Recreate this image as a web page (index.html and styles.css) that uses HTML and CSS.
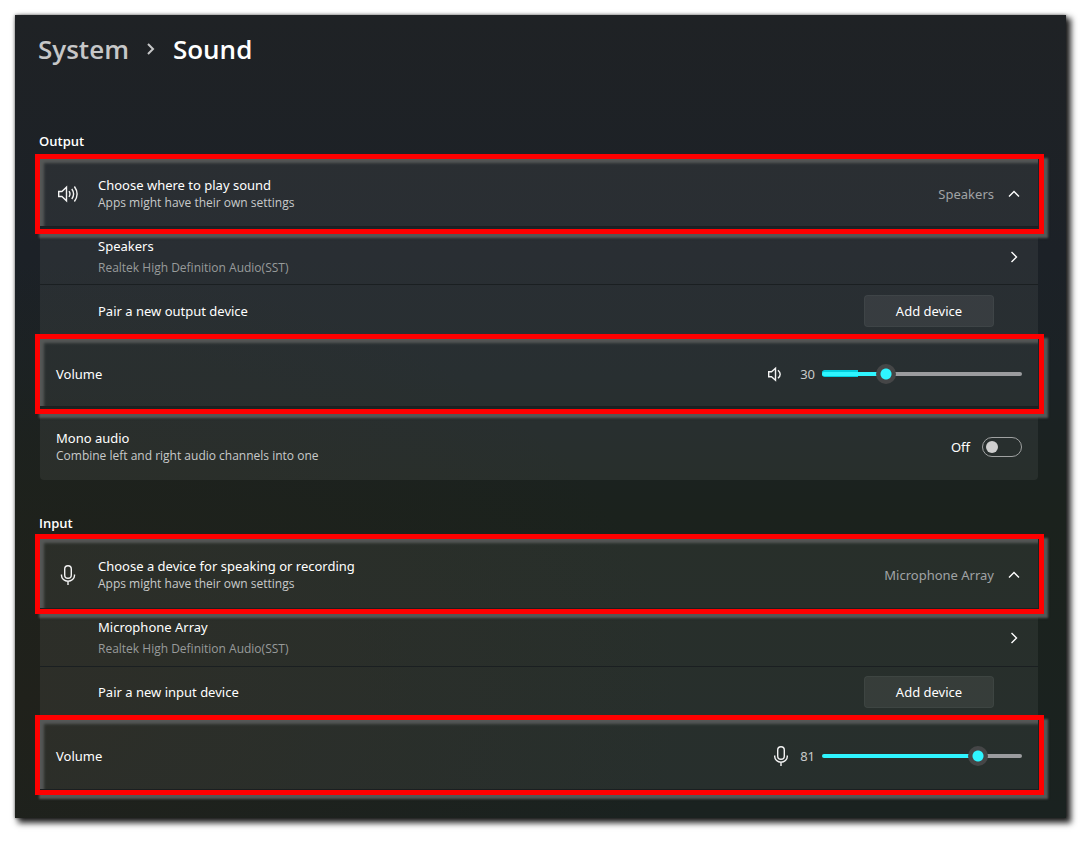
FILE: index.html
```html
<!doctype html>
<html lang="en">
	<head>
		<meta charset="UTF-8" />
		<meta name="viewport" content="width=device-width, initial-scale=1.0" />
		<title>System - Sound</title>
		<link rel="stylesheet" href="styles.css">
	</head>
	<body>
		<main class="window">
			<h1 class="breadcrumb">
				<a href="#system">System</a>
				<svg width="10" height="14" viewBox="0 0 10 14"><path d="M2 2l5 5-5 5" /></svg>
				<span>Sound</span>
			</h1>

			<section class="output">
				<h2>Output</h2>
				<div class="highlight">
					<div class="row">
						<svg class="icon" width="24" height="24" viewBox="0 0 24 24"><path d="M2.7 9.5h3.2l4.6-4.3v13.6l-4.6-4.3H2.7z" /><path d="M13 9.2q2 2.8 0 5.6M15.8 7q3.6 5 0 10M18.4 4.5q5.4 7.5 0 15" /></svg>
						<div class="text">
							<div>Choose where to play sound</div>
							<div class="description">Apps might have their own settings</div>
						</div>
						<span class="current">Speakers</span>
						<button class="chevron" aria-label="Collapse output devices" aria-expanded="true"><svg width="16" height="16" viewBox="0 0 16 16"><path d="M3 10.5l5-5 5 5" /></svg></button>
					</div>
				</div>
				<div class="row device">
					<div class="text">
						<div>Speakers</div>
						<div class="description">Realtek High Definition Audio(SST)</div>
					</div>
					<button class="chevron" aria-label="Speakers properties"><svg width="16" height="16" viewBox="0 0 16 16"><path d="M5.5 3l5 5-5 5" /></svg></button>
				</div>
				<div class="row pair">
					<div class="text">Pair a new output device</div>
					<button class="add">Add device</button>
				</div>
				<div class="highlight">
					<div class="row">
						<label class="text" for="output-volume">Volume</label>
						<svg class="icon" width="20" height="20" viewBox="0 0 20 20"><path d="M.7 7.7h2.8l4-3.5v12l-4-3.5H.7z" /><path d="M10 6.2q4.4 4 0 8" /></svg>
						<output class="level" for="output-volume">30</output>
						<input class="slider playing" id="output-volume" type="range" min="0" max="100" value="30" style="--level: 30%">
					</div>
				</div>
				<div class="row mono">
					<label class="text" for="mono">
						<span>Mono audio</span>
						<span class="description">Combine left and right audio channels into one</span>
					</label>
					<span class="state">Off</span>
					<input class="toggle" id="mono" type="checkbox">
				</div>
			</section>

			<section class="input">
				<h2>Input</h2>
				<div class="highlight">
					<div class="row">
						<svg class="icon" width="24" height="24" viewBox="0 0 24 24"><rect x="8.7" y="2.7" width="6.6" height="12.6" rx="3.3" /><path d="M5.5 11.5v1a6.5 5.7 0 0 0 13 0v-1M12 18.3v3.7" /></svg>
						<div class="text">
							<div>Choose a device for speaking or recording</div>
							<div class="description">Apps might have their own settings</div>
						</div>
						<span class="current">Microphone Array</span>
						<button class="chevron" aria-label="Collapse input devices" aria-expanded="true"><svg width="16" height="16" viewBox="0 0 16 16"><path d="M3 10.5l5-5 5 5" /></svg></button>
					</div>
				</div>
				<div class="row device">
					<div class="text">
						<div>Microphone Array</div>
						<div class="description">Realtek High Definition Audio(SST)</div>
					</div>
					<button class="chevron" aria-label="Microphone Array properties"><svg width="16" height="16" viewBox="0 0 16 16"><path d="M5.5 3l5 5-5 5" /></svg></button>
				</div>
				<div class="row pair">
					<div class="text">Pair a new input device</div>
					<button class="add">Add device</button>
				</div>
				<div class="highlight">
					<div class="row">
						<label class="text" for="input-volume">Volume</label>
						<svg class="icon" width="20" height="24" viewBox="4 0 20 24"><rect x="13.7" y="2.7" width="6.6" height="12.6" rx="3.3" /><path d="M10.7 11.5v1a6.3 5.7 0 0 0 12.6 0v-1M17 18.3v3.7" /></svg>
						<output class="level" for="input-volume">81</output>
						<input class="slider" id="input-volume" type="range" min="0" max="100" value="81" style="--level: 81%">
					</div>
				</div>
			</section>
		</main>

		<script>
			document.querySelectorAll('.slider').forEach((slider) => {
				slider.addEventListener('input', () => {
					slider.style.setProperty('--level', slider.value + '%');
					slider.previousElementSibling.textContent = slider.value;
				});
			});

			const mono = document.getElementById('mono');
			mono.addEventListener('change', () => {
				mono.previousElementSibling.textContent = mono.checked ? 'On' : 'Off';
			});
		</script>
	</body>
</html>
```
FILE: styles.css
```css
* { box-sizing: border-box; }
body { margin: 0; background: #fff; color: #fff; font: 13px/18px "Noto Sans", "Open Sans", sans-serif; }
button, input { font: inherit; color: inherit; margin: 0; }
svg { display: block; fill: none; stroke: currentColor; stroke-width: 1.4; flex: none; }

.window {
	margin: 15px 26px 26px 15px;
	padding: 16px 22px 23px 20px;
	background:
		radial-gradient(ellipse at 0 85%, #20211b, transparent 45%),
		linear-gradient(#1f2225 0%, #1c2127 30%, #1b2225 45%, #1b221d 62%, #1a2220 100%);
	box-shadow: 0 0 3px rgba(0, 0, 0, 0.5), 4px 4px 6px 1px rgba(0, 0, 0, 0.85);
}

.breadcrumb { display: flex; align-items: center; gap: 17px; margin: 0 0 65px 3px; font: 600 26px/36px "Open Sans", sans-serif; }
.breadcrumb a { color: #c6c7c8; text-decoration: none; }
.breadcrumb svg { color: #c6c7c8; stroke-width: 2; }
h2 { margin: 0 0 4px 4px; font: 600 13px/18px "Open Sans", sans-serif; }
.input h2 { margin-top: 34px; margin-bottom: 2px; }

.row { display: flex; align-items: center; margin: 0 6px 0 5px; padding: 0 16px; background: rgba(255, 255, 255, 0.06); }
.text { flex: 1; }
.text span { display: block; }
.description { font-family: "Open Sans", sans-serif; font-size: 12px; color: #c8caca; }
.icon { color: #f4f4f4; }

.highlight { position: relative; z-index: 1; height: 80px; padding: 0 1px 2px 0; border: 5px solid #f00; box-shadow: 4px 4px 2px #555756; }
.highlight .row { height: 100%; margin: 0; padding-top: 2px; border-bottom: 1px solid #1a1f21; box-shadow: inset 4px 4px 3px #555857; }
.input .highlight { padding-bottom: 0; }
.highlight .icon + .text { margin-left: 18px; }

.device { min-height: 51px; padding: 0 16px 4px 58px; border-bottom: 1px solid #1a1f21; line-height: 22px; }
.device .description { color: #989b9b; }
.input .device { min-height: 53px; }
.pair { min-height: 49px; padding: 2px 44px 0 58px; }
.input .pair { min-height: 48px; }
.mono { min-height: 66px; border-radius: 0 0 4px 4px; }

.current { margin-right: 12px; color: #a0a3a5; }
.chevron { padding: 0; border: 0; background: none; cursor: pointer; }
.add { width: 130px; height: 32px; padding: 0; border: 1px solid rgba(255, 255, 255, 0.04); border-radius: 4px; background: rgba(255, 255, 255, 0.07); cursor: pointer; }
.add:hover { background: rgba(255, 255, 255, 0.12); }

.level { margin: 0 7px 0 12px; color: #c8caca; }
.slider {
	appearance: none;
	width: 200px;
	height: 20px;
	border-radius: 4px;
	background: none;
	cursor: pointer;
}
/* live meter behind the track */
.slider.playing {
	background:
		radial-gradient(circle at 3px 50%, #00cfdf 3px, transparent 4px) 0 50% / 4px 7px no-repeat,
		linear-gradient(#00cfdf, #00cfdf) 3px 50% / 33px 7px no-repeat;
}
.slider::-webkit-slider-runnable-track { height: 4px; border-radius: 2px; background: linear-gradient(90deg, #2ff5ff var(--level), #9b9c9f var(--level)); }
.slider::-webkit-slider-thumb { appearance: none; width: 20px; height: 20px; margin-top: -8px; border-radius: 50%; background: radial-gradient(circle, #2ff5ff 5px, #454647 6px); }

.state { margin-right: 12px; }
.toggle { appearance: none; display: flex; align-items: center; width: 40px; height: 20px; padding: 0 3px; border: 1px solid #a0a2a2; border-radius: 10px; cursor: pointer; }
.toggle::before { content: ""; width: 12px; height: 12px; border-radius: 50%; background: #cfcfcf; }
.toggle:checked { justify-content: flex-end; border-color: #2ff5ff; background: #2ff5ff; }
.toggle:checked::before { background: #1a1f21; }
```
